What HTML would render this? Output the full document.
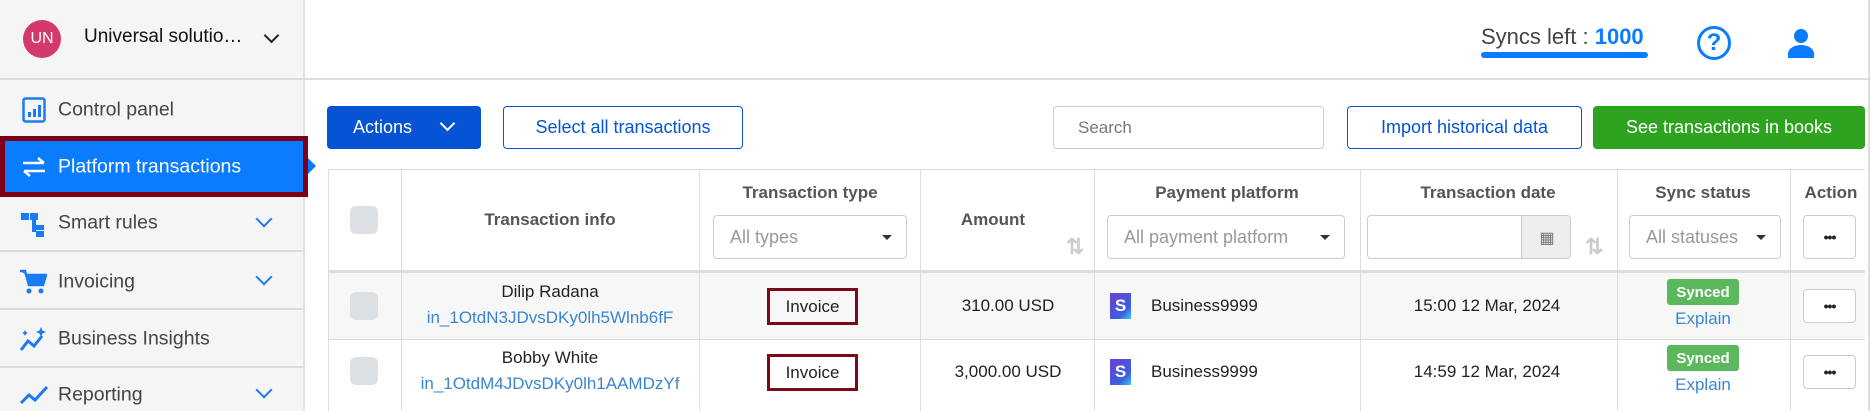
<!DOCTYPE html>
<html><head><meta charset="utf-8"><style>
*{box-sizing:border-box;margin:0;padding:0}
body{width:1871px;height:411px;overflow:hidden;background:#fff;font-family:"Liberation Sans",sans-serif;position:relative;color:#222}
.abs{position:absolute}
.sb{left:0;top:0;width:305px;height:411px;background:#f5f5f5;border-right:2px solid #e2e2e2}
.sep{position:absolute;left:0;width:305px;height:2px;background:#dcdcdc}
.item{position:absolute;left:58px;font-size:19.5px;color:#444;transform:translateY(-50%)}
.chev{position:absolute;left:258px;width:12px;height:12px;border-right:2.5px solid #1a7cf0;border-bottom:2.5px solid #1a7cf0;transform:rotate(45deg)}
.btn{position:absolute;top:106px;height:43px;border-radius:4px;font-size:18px;display:flex;align-items:center;justify-content:center}
.th{position:absolute;font-size:17px;font-weight:bold;color:#555;transform:translate(-50%,-50%);white-space:nowrap}
.dd{position:absolute;top:215px;height:44px;border:1px solid #ccc;border-radius:4px;background:#fff;font-size:18px;color:#999;display:flex;align-items:center;padding-left:16px;white-space:nowrap;overflow:hidden}
.caret{position:absolute;right:14px;top:19px;border-left:5px solid transparent;border-right:5px solid transparent;border-top:5px solid #333}
.vl{position:absolute;top:169px;width:1px;height:242px;background:#ddd}
.c{position:absolute;transform:translate(-50%,-50%);white-space:nowrap;font-size:17px}
.cb{position:absolute;width:28px;height:28px;border-radius:6px;background:#dde0e3;left:350px}
.dots{position:absolute;width:53px;height:34px;border:1px solid #ccc;border-radius:4px;background:#fff;display:flex;align-items:center;justify-content:center;font-size:14px;font-weight:bold;letter-spacing:-1px}
.badge{position:absolute;left:1667px;width:72px;height:26px;background:#5cb85c;color:#fff;font-weight:bold;font-size:15px;border-radius:3px;display:flex;align-items:center;justify-content:center}
.inv{position:absolute;left:767px;width:91px;height:37px;border:3px solid #7a0a17;display:flex;align-items:center;justify-content:center;font-size:17px}
.s{position:absolute;left:1110px;width:21px;height:26px;background:linear-gradient(135deg,#6a3fd0,#3a5fe0 70%,#3fc8f0);color:#fff;font-weight:bold;font-size:17px;display:flex;align-items:center;justify-content:center}
.sort{position:absolute;color:#ccc;font-size:22px;font-weight:bold}
</style></head><body>
<div class="abs sb"></div>
<div class="abs" style="left:23px;top:20px;width:38px;height:38px;border-radius:50%;background:#d23a6c;color:#fff;font-size:16px;display:flex;align-items:center;justify-content:center">UN</div>
<div class="abs" style="left:84px;top:26px;font-size:19px;color:#111">Universal solutio…</div>
<div class="abs" style="left:266px;top:30px;width:11px;height:11px;border-right:2.5px solid #222;border-bottom:2.5px solid #222;transform:rotate(45deg)"></div>
<div class="sep" style="top:78px"></div>
<svg class="abs" style="left:22px;top:97px" width="24" height="26" viewBox="0 0 24 26"><rect x="1.5" y="1.5" width="21" height="23" rx="2" fill="none" stroke="#1a7cf0" stroke-width="2.5"/><rect x="6" y="15" width="3" height="5" fill="#1a7cf0"/><rect x="11" y="12" width="3" height="8" fill="#1a7cf0"/><rect x="16" y="8" width="3" height="12" fill="#1a7cf0"/></svg>
<div class="item" style="top:110px">Control panel</div>
<div class="abs" style="left:0;top:136px;width:308px;height:61px;background:#0a7cff;border:5px solid #7f0016"></div>
<div class="abs" style="left:308px;top:158px;border-top:8px solid transparent;border-bottom:8px solid transparent;border-left:8px solid #0a7cff"></div>
<svg class="abs" style="left:21px;top:156px" width="26" height="22" viewBox="0 0 26 22"><path d="M2 7H23M17 2l6 5M24 15H3M9 20l-6-5" fill="none" stroke="#fff" stroke-width="2.5"/></svg>
<div class="item" style="top:167px;color:#fff">Platform transactions</div>
<svg class="abs" style="left:21px;top:211px" width="26" height="26" viewBox="0 0 26 26"><rect x="0" y="2" width="8" height="7" fill="#1a7cf0"/><rect x="9" y="2" width="8" height="7" fill="#1a7cf0"/><rect x="11" y="9" width="4" height="12" fill="#1a7cf0"/><rect x="15" y="14" width="8" height="5" fill="#1a7cf0"/><rect x="15" y="20" width="8" height="6" fill="#1a7cf0"/></svg>
<div class="item" style="top:223px">Smart rules</div><div class="chev" style="top:213px"></div>
<div class="sep" style="top:250px"></div>
<svg class="abs" style="left:19px;top:268px" width="28" height="28" viewBox="0 0 28 28"><path d="M1 3h5l4 14h14l3-10H8" fill="#1a7cf0" stroke="#1a7cf0" stroke-width="2.5"/><circle cx="10" cy="23" r="2.5" fill="#1a7cf0"/><circle cx="22" cy="23" r="2.5" fill="#1a7cf0"/></svg>
<div class="item" style="top:282px">Invoicing</div><div class="chev" style="top:271px"></div>
<div class="sep" style="top:308px"></div>
<svg class="abs" style="left:19px;top:326px" width="30" height="26" viewBox="0 0 30 26"><path d="M2 24l7-9 6 5 8-10" fill="none" stroke="#1a7cf0" stroke-width="3"/><path d="M22 1l1.5 3.5L27 6l-3.5 1.5L22 11l-1.5-3.5L17 6l3.5-1.5zM6 4l1 2 2 1-2 1-1 2-1-2-2-1 2-1z" fill="#1a7cf0"/></svg>
<div class="item" style="top:339px">Business Insights</div>
<div class="sep" style="top:366px"></div>
<svg class="abs" style="left:19px;top:383px" width="30" height="22" viewBox="0 0 30 22"><path d="M2 20l8-8 6 5 12-13" fill="none" stroke="#1a7cf0" stroke-width="3"/></svg>
<div class="item" style="top:395px">Reporting</div><div class="chev" style="top:384px"></div>

<div class="abs" style="left:305px;top:78px;width:1566px;height:2px;background:#ddd"></div>
<div class="abs" style="left:1868px;top:0;width:2px;height:411px;background:#ddd"></div>
<div class="abs" style="left:1481px;top:24px;font-size:22px;color:#444">Syncs left : <b style="color:#0a7cff">1000</b></div>
<div class="abs" style="left:1481px;top:52px;width:167px;height:6px;border-radius:3px;background:#0a7cff"></div>
<div class="abs" style="left:1697px;top:26px;width:34px;height:34px;border:3px solid #0a7cff;border-radius:50%;color:#0a7cff;font-size:24px;font-weight:bold;display:flex;align-items:center;justify-content:center">?</div>
<svg class="abs" style="left:1786px;top:28px" width="30" height="30" viewBox="0 0 30 30"><circle cx="15" cy="8" r="7" fill="#0a7cff"/><path d="M2 30v-4c0-6 7-9 13-9s13 3 13 9v4z" fill="#0a7cff"/></svg>

<div class="btn" style="left:327px;width:154px;background:#0654d4;color:#fff;justify-content:flex-start;padding-left:26px">Actions<span style="position:absolute;left:115px;top:12px;width:11px;height:11px;border-right:2.5px solid #fff;border-bottom:2.5px solid #fff;transform:rotate(45deg)"></span></div>
<div class="btn" style="left:503px;width:240px;border:1.5px solid #0654d4;color:#0654d4">Select all transactions</div>
<div class="btn" style="left:1053px;width:271px;border:1px solid #ccc;color:#777;justify-content:flex-start;padding-left:24px;font-size:17px">Search</div>
<div class="btn" style="left:1347px;width:235px;border:1.5px solid #0654d4;color:#0654d4">Import historical data</div>
<div class="btn" style="left:1593px;width:272px;background:#2ea31f;color:#fff">See transactions in books</div>

<div class="abs" style="left:328px;top:169px;width:1537px;height:1px;background:#ddd"></div>
<div class="abs" style="left:328px;top:270px;width:1537px;height:3px;background:#ddd"></div>
<div class="abs" style="left:328px;top:273px;width:1537px;height:66px;background:#f7f7f7"></div>
<div class="abs" style="left:328px;top:339px;width:1537px;height:1px;background:#ddd"></div>
<div class="vl" style="left:328px"></div><div class="vl" style="left:401px"></div><div class="vl" style="left:699px"></div><div class="vl" style="left:920px"></div><div class="vl" style="left:1094px"></div><div class="vl" style="left:1360px"></div><div class="vl" style="left:1617px"></div><div class="vl" style="left:1790px"></div>

<div class="cb" style="top:206px"></div>
<div class="th" style="left:550px;top:220px">Transaction info</div>
<div class="th" style="left:810px;top:193px">Transaction type</div>
<div class="dd" style="left:713px;width:194px">All types<span class="caret"></span></div>
<div class="th" style="left:993px;top:220px">Amount</div>
<div class="sort" style="left:1066px;top:234px">⇅</div>
<div class="th" style="left:1227px;top:193px">Payment platform</div>
<div class="dd" style="left:1107px;width:238px">All payment platform<span class="caret"></span></div>
<div class="th" style="left:1488px;top:193px">Transaction date</div>
<div class="dd" style="left:1367px;width:204px;padding:0"><span style="position:absolute;left:153px;top:0;width:51px;height:44px;background:#eee;border-left:1px solid #ccc;display:flex;align-items:center;justify-content:center;color:#777;font-size:16px">▦</span></div>
<div class="sort" style="left:1585px;top:234px">⇅</div>
<div class="th" style="left:1703px;top:193px">Sync status</div>
<div class="dd" style="left:1629px;width:152px">All statuses<span class="caret"></span></div>
<div class="th" style="left:1831px;top:193px">Action</div>
<div class="dots" style="left:1803px;top:215px;height:44px">•••</div>

<div class="cb" style="top:292px"></div>
<div class="c" style="left:550px;top:292px">Dilip Radana</div>
<div class="c" style="left:550px;top:318px;color:#3a86d0">in_1OtdN3JDvsDKy0lh5Wlnb6fF</div>
<div class="inv" style="top:288px">Invoice</div>
<div class="c" style="left:1008px;top:306px">310.00 USD</div>
<div class="s" style="top:293px">S</div>
<div class="abs" style="left:1151px;top:296px;font-size:17px">Business9999</div>
<div class="c" style="left:1487px;top:306px">15:00 12 Mar, 2024</div>
<div class="badge" style="top:279px">Synced</div>
<div class="c" style="left:1703px;top:319px;color:#3a86d0">Explain</div>
<div class="dots" style="left:1803px;top:289px">•••</div>

<div class="cb" style="top:357px"></div>
<div class="c" style="left:550px;top:358px">Bobby White</div>
<div class="c" style="left:550px;top:384px;color:#3a86d0">in_1OtdM4JDvsDKy0lh1AAMDzYf</div>
<div class="inv" style="top:354px">Invoice</div>
<div class="c" style="left:1008px;top:372px">3,000.00 USD</div>
<div class="s" style="top:359px">S</div>
<div class="abs" style="left:1151px;top:362px;font-size:17px">Business9999</div>
<div class="c" style="left:1487px;top:372px">14:59 12 Mar, 2024</div>
<div class="badge" style="top:345px">Synced</div>
<div class="c" style="left:1703px;top:385px;color:#3a86d0">Explain</div>
<div class="dots" style="left:1803px;top:355px">•••</div>
</body></html>
